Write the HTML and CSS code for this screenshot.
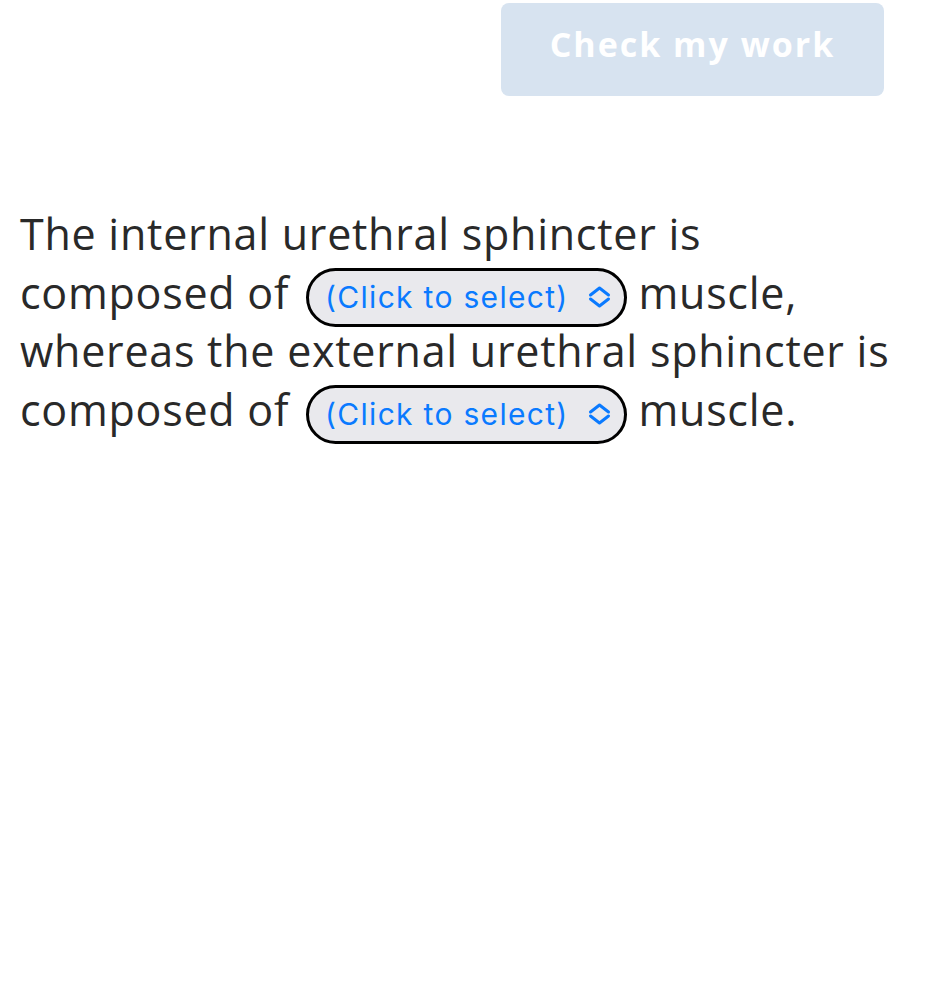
FILE: index.html
```html
<!DOCTYPE html>
<html lang="en">
<head>
  <meta charset="UTF-8" />
  <meta name="viewport" content="width=device-width, initial-scale=1.0" />
  <title>Question</title>
  <link rel="stylesheet" href="styles.css">
</head>
<body>
  <div class="toolbar">
    <button class="check-btn" disabled>Check my work</button>
  </div>

  <p class="question">
    The internal urethral sphincter is composed of
    <span class="picker">(Click to select)
      <svg class="chevrons" viewBox="0 0 23 22" width="23" height="22">
        <path d="M2.5 9 L11.5 2 L20.5 9 M2.5 13 L11.5 20 L20.5 13" fill="none" stroke="currentColor" stroke-width="3" stroke-linecap="round" stroke-linejoin="round"/>
      </svg>
    </span>
    muscle, whereas the external urethral sphincter is composed of
    <span class="picker">(Click to select)
      <svg class="chevrons" viewBox="0 0 23 22" width="23" height="22">
        <path d="M2.5 9 L11.5 2 L20.5 9 M2.5 13 L11.5 20 L20.5 13" fill="none" stroke="currentColor" stroke-width="3" stroke-linecap="round" stroke-linejoin="round"/>
      </svg>
    </span>
    muscle.
  </p>
</body>
</html>
```

FILE: styles.css
```css
* {
  margin: 0;
  padding: 0;
  box-sizing: border-box;
}

body {
  font-family: 'Open Sans', 'Noto Sans', sans-serif;
  background: #fff;
  color: #292929;
}

.toolbar {
  display: flex;
  justify-content: flex-end;
  padding: 3px 60px 0 0;
}

.check-btn {
  width: 383px;
  height: 93px;
  border: none;
  border-radius: 8px;
  background: #d7e3f0;
  color: #fff;
  font-family: inherit;
  font-size: 34px;
  font-weight: 700;
  letter-spacing: 2px;
  padding-bottom: 12px;
}

.question {
  margin-top: 109px;
  padding: 0 20px 20px;
  font-size: 43px;
  line-height: 58.5px;
  letter-spacing: 0.75px;
}

.picker {
  display: inline-flex;
  align-items: center;
  gap: 19px;
  height: 59px;
  margin: -6px 0 -6px 5px;
  padding: 0 13px 0 16px;
  border: 3px solid #000;
  border-radius: 30px;
  background: #e9e9ed;
  color: #0a7aff;
  font-family: Inter, 'Noto Sans', sans-serif;
  font-size: 30px;
  letter-spacing: 1.3px;
  vertical-align: middle;
}

.chevrons {
  flex-shrink: 0;
}
```
